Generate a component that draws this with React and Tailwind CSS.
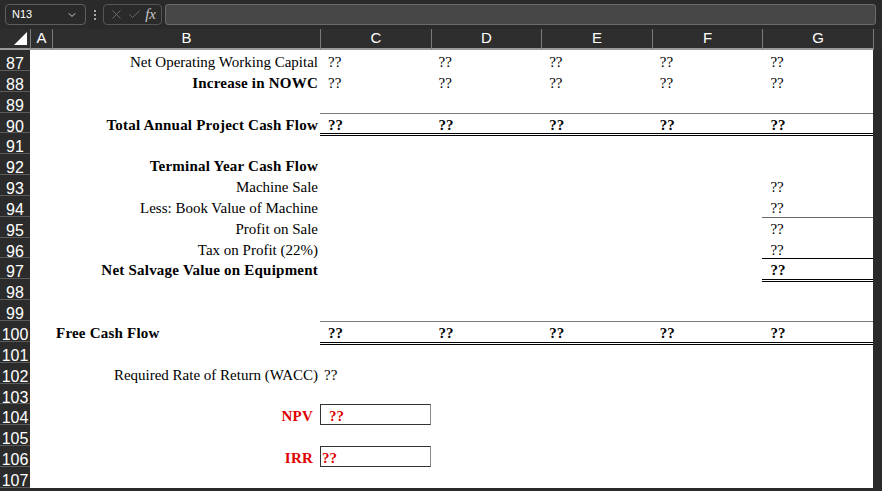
import React from "react";
import { ChevronDown, X, Check } from "lucide-react";

const rowNums = Array.from({ length: 21 }, (_, i) => 87 + i);

const serif = { fontFamily: '"Liberation Serif", "Times New Roman", serif' };

function Cell({ w, className = "", children }) {
  return (
    <div className={`shrink-0 h-full flex items-start overflow-visible whitespace-nowrap ${w} ${className}`}>
      {children}
    </div>
  );
}

const CW = "w-[110.6px]";

function B({ children, className = "" }) {
  return <span className={`font-bold tracking-[0.22px] ${className}`}>{children}</span>;
}

function Row({ n, b, bClass = "justify-end pr-[2px] pt-[5px]", cells = {}, cellClass = {} }) {
  return (
    <div className="flex h-[20.85px]">
      <div className="w-[30px] shrink-0 h-full bg-[#2b2b2b] border-b border-[#5c5c5c] flex items-start justify-center pt-[6px] text-white text-[16px] leading-none" style={{ fontFamily: '"Liberation Sans", Arial, sans-serif' }}>
        {n}
      </div>
      <div className="flex flex-1 bg-white text-[15px] leading-[15px] text-black" style={serif}>
        <Cell w="w-[22px]" />
        <Cell w="w-[268px]" className={bClass}>{b}</Cell>
        {["C", "D", "E", "F", "G"].map((c) => (
          <Cell key={c} w={CW} className={cellClass[c] || "pl-[8px] pt-[5px]"}>
            {cells[c]}
          </Cell>
        ))}
      </div>
    </div>
  );
}

export default function App() {
  const q = "??";
  const qb = <span className="font-bold">??</span>;
  const allQ = { C: q, D: q, E: q, F: q, G: q };
  const allQb = { C: qb, D: qb, E: qb, F: qb, G: qb };
  const topB = "pl-[8px] pt-[4px] border-t border-[#7a7a7a]";
  const topCls = { C: topB, D: topB, E: topB, F: topB, G: topB };
  const dbl = "border-t-[3px] border-double border-black";
  const dblCls = { C: dbl, D: dbl, E: dbl, F: dbl, G: dbl };

  return (
    <div className="w-[882px] h-[491px] bg-[#2a2a2a] overflow-hidden flex flex-col" style={{ fontFamily: '"Liberation Sans", Arial, sans-serif' }}>
      {/* top bar */}
      <div className="h-[29px] flex items-center shrink-0">
        <div className="ml-[5px] w-[81px] h-[21px] rounded-[4px] border border-[#5e5e5e] flex items-center justify-between pl-[6px] pr-[7px]">
          <span className="text-white text-[11px]">N13</span>
          <ChevronDown size={12} className="text-[#cfcfcf]" strokeWidth={2} />
        </div>
        <div className="w-[17px] flex flex-col items-center gap-[2px]">
          <span className="w-[2px] h-[2px] bg-[#d0d0d0] rounded-full" />
          <span className="w-[2px] h-[2px] bg-[#d0d0d0] rounded-full" />
          <span className="w-[2px] h-[2px] bg-[#d0d0d0] rounded-full" />
        </div>
        <div className="w-[59px] h-[21px] rounded-[4px] border border-[#555] flex items-center justify-between px-[5px]">
          <X size={15} className="text-[#6e6e6e]" strokeWidth={1.5} />
          <Check size={15} className="text-[#6e6e6e]" strokeWidth={1.5} />
          <span className="text-[#c8c8c8] text-[15px] italic leading-none" style={serif}>fx</span>
        </div>
        <div className="ml-[3px] flex-1 h-[21px] mr-[6px] bg-[#474747] border border-[#6a6a6a] rounded-[3px]" />
      </div>

      {/* column header */}
      <div className="flex h-[21px] shrink-0 bg-[#2e2e2e] text-white text-[15px]">
        <div className="w-[30px] h-full relative border-b-2 border-[#9a9a9a]">
          <div className="absolute right-[3px] bottom-[3px] w-0 h-0 border-l-[13px] border-l-transparent border-b-[13px] border-b-white" />
        </div>
        <div className="w-[22px] h-full flex items-center justify-center border-l border-[#7a7a7a] border-b-2 border-b-[#9a9a9a]">A</div>
        <div className="w-[268px] h-full flex items-center justify-center border-l border-[#7a7a7a] border-b-2 border-b-[#9a9a9a]">B</div>
        {["C", "D", "E", "F", "G"].map((c) => (
          <div key={c} className="w-[110.6px] h-full flex items-center justify-center border-l border-[#7a7a7a] border-b-2 border-b-[#9a9a9a]">{c}</div>
        ))}
        <div className="flex-1 border-l border-[#7a7a7a]" />
      </div>

      {/* body */}
      <div className="flex flex-col">
        {rowNums.map((n) => {
          const wrap = (row) => (
            <div key={n} className="flex">
              <div className="w-[873px]">{row}</div>
              <div className="flex-1 bg-[#2a2a2a]" />
            </div>
          );
          switch (n) {
            case 87:
              return wrap(<Row n={n} b="Net Operating Working Capital" cells={allQ} />);
            case 88:
              return wrap(<Row n={n} b={<B>Increase in NOWC</B>} cells={allQ} />);
            case 90:
              return wrap(<Row n={n} b={<B>Total Annual Project Cash Flow</B>} cells={allQb} cellClass={topCls} />);
            case 91:
              return wrap(<Row n={n} b="" cellClass={dblCls} />);
            case 92:
              return wrap(<Row n={n} b={<B>Terminal Year Cash Flow</B>} />);
            case 93:
              return wrap(<Row n={n} b="Machine Sale" cells={{ G: q }} />);
            case 94:
              return wrap(<Row n={n} b="Less: Book Value of Machine" cells={{ G: q }} />);
            case 95:
              return wrap(<Row n={n} b="Profit on Sale" cells={{ G: q }} cellClass={{ G: "pl-[8px] pt-[4px] border-t border-[#6a6a6a]" }} />);
            case 96:
              return wrap(<Row n={n} b="Tax on Profit (22%)" cells={{ G: q }} />);
            case 97:
              return wrap(<Row n={n} b={<B>Net Salvage Value on Equipment</B>} cells={{ G: qb }} cellClass={{ G: "pl-[8px] pt-[4px] border-t border-black" }} />);
            case 98:
              return wrap(<Row n={n} b="" cellClass={{ G: dbl }} />);
            case 100:
              return wrap(<Row n={n} bClass="justify-start pl-[4px] pt-[5px]" b={<B>Free Cash Flow</B>} cells={allQb} cellClass={topCls} />);
            case 101:
              return wrap(<Row n={n} b="" cellClass={dblCls} />);
            case 102:
              return wrap(<Row n={n} b="Required Rate of Return (WACC)" cells={{ C: q }} cellClass={{ C: "pl-[4px] pt-[5px]" }} />);
            case 104:
              return wrap(<Row n={n} bClass="justify-end pr-[7px] pt-[5px]" b={<B className="text-[#e00000]">NPV</B>} cells={{ C: <span className="font-bold text-[#e00000]">??</span> }} cellClass={{ C: "pl-[8px] pt-[4px] border border-[#333] border-r-[#8a8a8a]" }} />);
            case 106:
              return wrap(<Row n={n} bClass="justify-end pr-[7px] pt-[5px]" b={<B className="text-[#e00000]">IRR</B>} cells={{ C: <span className="font-bold text-[#e00000]">??</span> }} cellClass={{ C: "pl-[1px] pt-[4px] border border-[#333] border-r-[#8a8a8a]" }} />);
            default:
              return wrap(<Row n={n} b="" />);
          }
        })}
      </div>
    </div>
  );
}
